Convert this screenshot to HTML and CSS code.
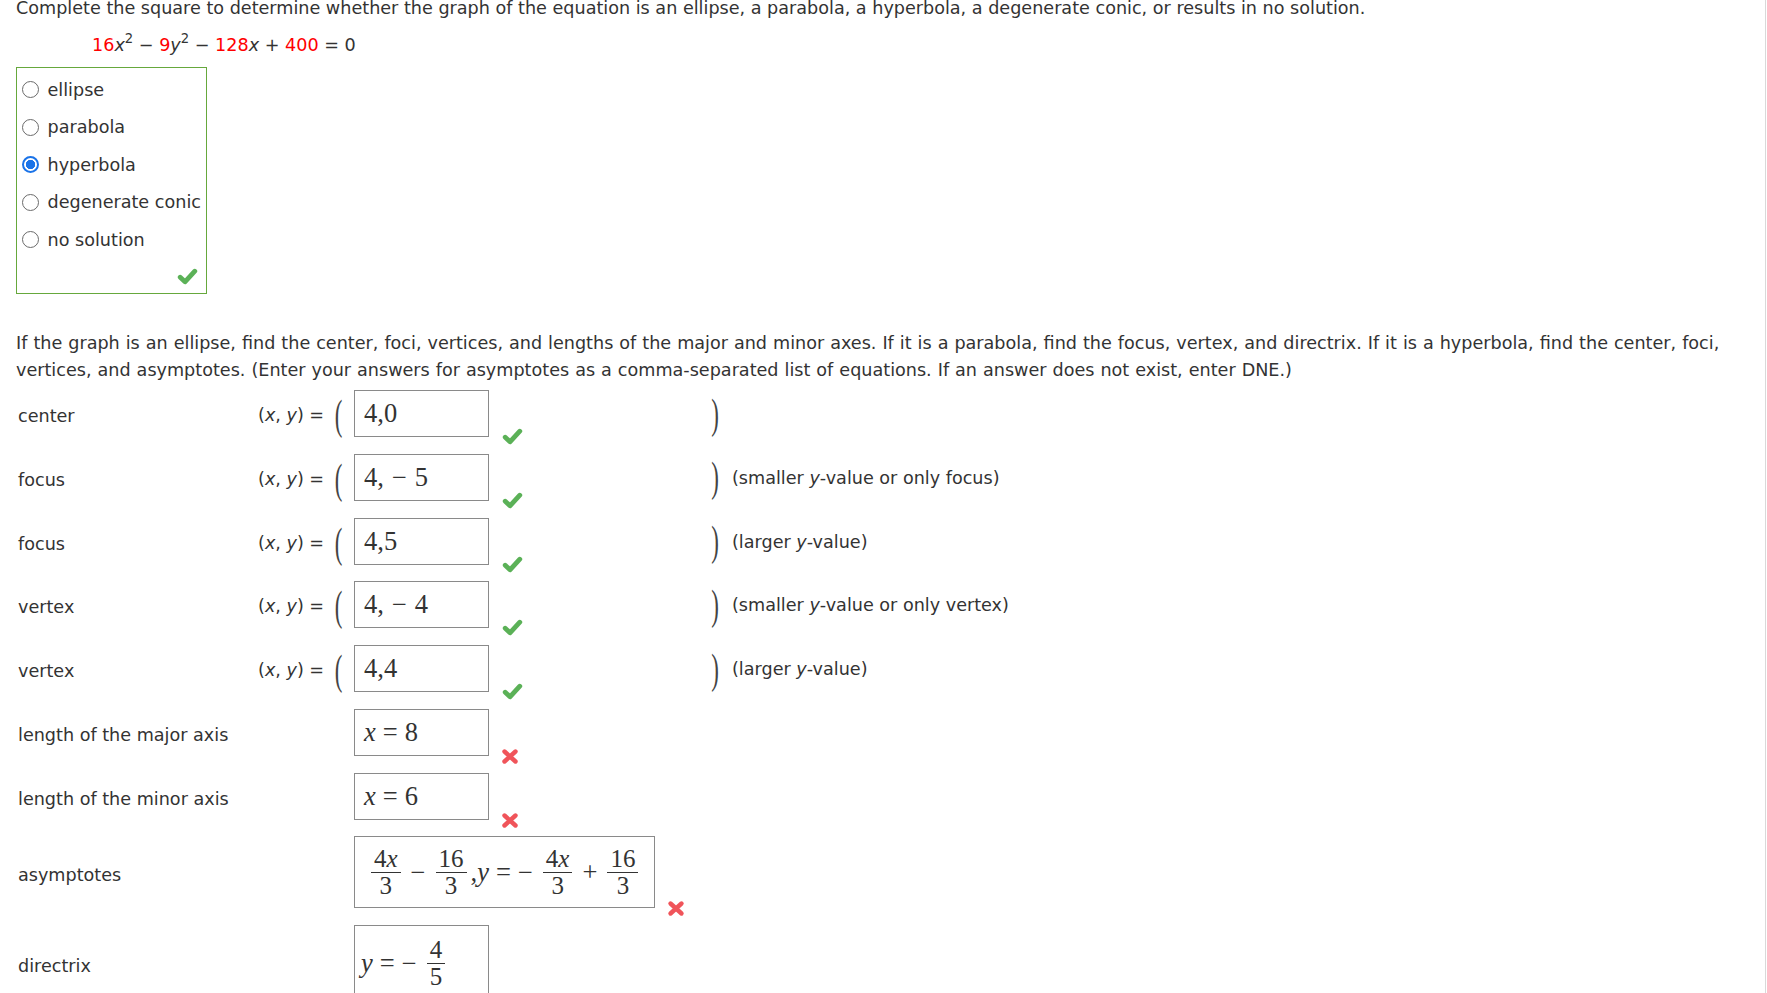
FILE: index.html
```html
<!DOCTYPE html>
<html>
<head>
<meta charset="utf-8">
<title>Conic sections</title>
<link rel="stylesheet" href="styles.css">
</head>
<body>
<div class="page">
  <p class="title">Complete the square to determine whether the graph of the equation is an ellipse, a parabola, a hyperbola, a degenerate conic, or results in no solution.</p>
  <p class="equation"><span class="red">16</span><i>x</i><sup>2</sup> − <span class="red">9</span><i>y</i><sup>2</sup> − <span class="red">128</span><i>x</i> + <span class="red">400</span> = 0</p>

  <div class="choices">
    <div class="choice"><span class="radio"></span>ellipse</div>
    <div class="choice"><span class="radio"></span>parabola</div>
    <div class="choice"><span class="radio checked"></span>hyperbola</div>
    <div class="choice"><span class="radio"></span>degenerate conic</div>
    <div class="choice"><span class="radio"></span>no solution</div>
    <div class="choice-mark">
      <svg class="icon-check" viewBox="0 0 21 17" width="21" height="17"><path d="M3.2 9.2 L8 13.8 L17.8 3.2" /></svg>
    </div>
  </div>

  <p class="instructions">If the graph is an ellipse, find the center, foci, vertices, and lengths of the major and minor axes. If it is a parabola, find the focus, vertex, and directrix. If it is a hyperbola, find the center, foci, vertices, and asymptotes. (Enter your answers for asymptotes as a comma-separated list of equations. If an answer does not exist, enter DNE.)</p>

  <div class="answers">
    <div class="row">
      <span class="label">center</span>
      <span class="prefix"><span class="xy">(<i>x</i>, <i>y</i>) =</span><span class="paren">(</span></span>
      <span class="box"><span class="math">4,0</span></span>
      <svg class="mark icon-check" viewBox="0 0 21 17" width="21" height="17"><path d="M3.2 9.2 L8 13.8 L17.8 3.2" /></svg>
      <span class="close">)</span>
    </div>
    <div class="row">
      <span class="label">focus</span>
      <span class="prefix"><span class="xy">(<i>x</i>, <i>y</i>) =</span><span class="paren">(</span></span>
      <span class="box"><span class="math">4,<span class="op">−</span>5</span></span>
      <svg class="mark icon-check" viewBox="0 0 21 17" width="21" height="17"><path d="M3.2 9.2 L8 13.8 L17.8 3.2" /></svg>
      <span class="close">)</span>
      <span class="note">(smaller <i>y</i>-value or only focus)</span>
    </div>
    <div class="row">
      <span class="label">focus</span>
      <span class="prefix"><span class="xy">(<i>x</i>, <i>y</i>) =</span><span class="paren">(</span></span>
      <span class="box"><span class="math">4,5</span></span>
      <svg class="mark icon-check" viewBox="0 0 21 17" width="21" height="17"><path d="M3.2 9.2 L8 13.8 L17.8 3.2" /></svg>
      <span class="close">)</span>
      <span class="note">(larger <i>y</i>-value)</span>
    </div>
    <div class="row">
      <span class="label">vertex</span>
      <span class="prefix"><span class="xy">(<i>x</i>, <i>y</i>) =</span><span class="paren">(</span></span>
      <span class="box"><span class="math">4,<span class="op">−</span>4</span></span>
      <svg class="mark icon-check" viewBox="0 0 21 17" width="21" height="17"><path d="M3.2 9.2 L8 13.8 L17.8 3.2" /></svg>
      <span class="close">)</span>
      <span class="note">(smaller <i>y</i>-value or only vertex)</span>
    </div>
    <div class="row">
      <span class="label">vertex</span>
      <span class="prefix"><span class="xy">(<i>x</i>, <i>y</i>) =</span><span class="paren">(</span></span>
      <span class="box"><span class="math">4,4</span></span>
      <svg class="mark icon-check" viewBox="0 0 21 17" width="21" height="17"><path d="M3.2 9.2 L8 13.8 L17.8 3.2" /></svg>
      <span class="close">)</span>
      <span class="note">(larger <i>y</i>-value)</span>
    </div>
    <div class="row">
      <span class="label">length of the major axis</span>
      <span class="prefix"></span>
      <span class="box"><span class="math"><i>x</i><span class="rel">=</span>8</span></span>
      <svg class="mark icon-cross" viewBox="0 0 18 17" width="18" height="17"><path d="M3.5 3.5 L14.5 13.5 M14.5 3.5 L3.5 13.5" /></svg>
    </div>
    <div class="row">
      <span class="label">length of the minor axis</span>
      <span class="prefix"></span>
      <span class="box"><span class="math"><i>x</i><span class="rel">=</span>6</span></span>
      <svg class="mark icon-cross" viewBox="0 0 18 17" width="18" height="17"><path d="M3.5 3.5 L14.5 13.5 M14.5 3.5 L3.5 13.5" /></svg>
    </div>
    <div class="row">
      <span class="label">asymptotes</span>
      <span class="prefix"></span>
      <span class="box wide"><span class="math">
        <span class="frac"><span class="num">4<i>x</i></span><span class="den">3</span></span>
        <span class="op">−</span>
        <span class="frac"><span class="num">16</span><span class="den">3</span></span>
        <span class="comma">,</span><i>y</i><span class="rel">=</span><span class="neg">−</span>
        <span class="frac"><span class="num">4<i>x</i></span><span class="den">3</span></span>
        <span class="op">+</span>
        <span class="frac"><span class="num">16</span><span class="den">3</span></span>
      </span></span>
      <svg class="mark icon-cross" viewBox="0 0 18 17" width="18" height="17"><path d="M3.5 3.5 L14.5 13.5 M14.5 3.5 L3.5 13.5" /></svg>
    </div>
    <div class="row">
      <span class="label">directrix</span>
      <span class="prefix"></span>
      <span class="box tall"><span class="math"><i>y</i><span class="rel">=</span><span class="neg">−</span><span class="frac"><span class="num">4</span><span class="den">5</span></span></span></span>
      <svg class="mark icon-cross" viewBox="0 0 18 17" width="18" height="17"><path d="M3.5 3.5 L14.5 13.5 M14.5 3.5 L3.5 13.5" /></svg>
    </div>
  </div>
</div>
</body>
</html>
```

FILE: styles.css
```css
html, body {
  margin: 0;
  padding: 0;
  background: #fff;
}
body {
  width: 1766px;
  min-height: 100vh;
  box-sizing: border-box;
  border-right: 1px solid #d9d9d9;
  overflow: hidden;
}
.page {
  padding-left: 16px;
  padding-right: 30px;
  font-family: "DejaVu Sans", Verdana, sans-serif;
  font-size: 17.6px;
  color: #333;
}
p { margin: 0; }
.title {
  line-height: 22px;
  margin-top: -3px;
}
.equation {
  line-height: 27px;
  margin-top: 12.5px;
  padding-left: 76px;
}
.equation .red { color: #ff0000; }
.equation sup {
  font-size: 0.75em;
  vertical-align: 0.62em;
  line-height: 0;
}
.choices {
  margin-top: 8.5px;
  width: 191px;
  height: 227px;
  box-sizing: border-box;
  border: 1px solid #66a83c;
  padding: 3px 0 0 5px;
}
.choice {
  display: flex;
  align-items: center;
  height: 37.5px;
  white-space: nowrap;
}
.radio {
  width: 17px;
  height: 17px;
  box-sizing: border-box;
  border: 1.4px solid #6b6b6b;
  border-radius: 50%;
  background: #fff;
  margin-right: 9px;
  margin-left: -0.5px;
  flex: none;
}
.radio.checked {
  border: 2px solid #1a73e8;
  background: radial-gradient(circle, #1a73e8 0 4.4px, #fff 5px);
}
.choice-mark {
  display: flex;
  justify-content: flex-end;
  padding-right: 8px;
  margin-top: 9px;
}
.icon-check path {
  fill: none;
  stroke: #5bb157;
  stroke-width: 4.8;
  stroke-linecap: round;
  stroke-linejoin: round;
}
.icon-cross path {
  fill: none;
  stroke: #f0545a;
  stroke-width: 4.4;
  stroke-linecap: round;
}
.instructions {
  margin-top: 35.5px;
  line-height: 27px;
  word-spacing: 0.4px;
}
.answers {
  margin-top: 6.5px;
  display: flex;
  flex-direction: column;
  gap: 16.75px;
}
.row {
  display: flex;
  align-items: center;
}
.label {
  width: 240px;
  padding-left: 2px;
  padding-top: 5px;
  flex: none;
  white-space: nowrap;
}
.prefix {
  width: 96px;
  flex: none;
  display: flex;
  align-items: center;
  padding-top: 3px;
}
.xy { white-space: nowrap; }
.paren, .close {
  font-family: "Liberation Serif", "Times New Roman", serif;
  font-size: 27px;
  line-height: 40px;
  color: #444;
  display: inline-block;
  transform: scale(0.85, 1.55);
}
.paren { margin-left: 10px; }
.box {
  width: 135px;
  height: 47px;
  box-sizing: border-box;
  border: 1px solid #8a8a8a;
  flex: none;
  display: flex;
  align-items: center;
  padding-left: 9px;
}
.box.wide {
  width: 301px;
  height: 72px;
  padding-left: 14px;
}
.box.tall {
  height: 76px;
  padding-left: 6px;
}
.math {
  font-family: "Liberation Serif", "Times New Roman", serif;
  font-size: 26.5px;
  color: #333;
  white-space: nowrap;
  display: inline-flex;
  align-items: center;
}
.math i { font-style: italic; }
.math .op { margin: 0 8px; }
.math .rel { margin: 0 7px; }
.math .neg { margin-right: 8px; }
.math .comma { margin-left: 2px; }
.frac {
  display: inline-flex;
  flex-direction: column;
  align-items: stretch;
  text-align: center;
  font-size: 25px;
  line-height: 24px;
  margin: 0 2px;
}
.frac .num {
  border-bottom: 1px solid #333;
  padding: 0 3px 1px;
}
.frac .den {
  padding-top: 1px;
}
.mark {
  flex: none;
  align-self: flex-end;
  margin: 0 0 -8px 13px;
}
.icon-cross.mark { margin-bottom: -9px; margin-left: 12px; }
.close {
  margin-left: 187px;
  width: 10px;
  text-align: center;
}
.note {
  margin-left: 12px;
  white-space: nowrap;
  padding-top: 1px;
}
```
